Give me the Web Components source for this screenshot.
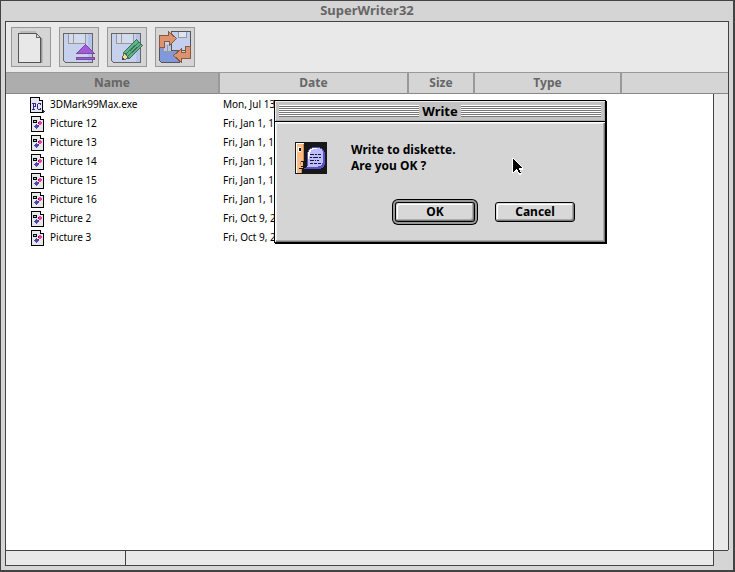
<!DOCTYPE html>
<html lang="en">
<head>
<meta charset="utf-8">
<title>SuperWriter32</title>
<style>
html, body { height: 100%; margin: 0; }
body { font-family: "Noto Sans", "Open Sans", sans-serif; color: #000; overflow: hidden; }
</style>
</head>
<body>
<app-window heading="SuperWriter32">
  <tool-bar slot="tools">
    <tool-button icon="page" label="New"></tool-button>
    <tool-button icon="eject" label="Eject"></tool-button>
    <tool-button icon="write" label="Write"></tool-button>
    <tool-button icon="copy" label="Copy disk"></tool-button>
  </tool-bar>
  <file-list></file-list>
  <status-bar slot="status"></status-bar>
</app-window>
<alert-dialog heading="Write">Write to diskette.<br>Are you OK ?</alert-dialog>
<mouse-pointer></mouse-pointer>

<script>
const define = (name, render) => customElements.define(name, class extends HTMLElement {
  connectedCallback() {
    if (this.shadowRoot) return;
    const t = document.createElement('template');
    t.innerHTML = render(this);
    this.attachShadow({ mode: 'open' }).append(t.content.cloneNode(true));
  }
});

const floppy = `
  <path fill="#b5c3ea" stroke="#666" d="M4.500 6.500h29v29h-27l-2-2z"/>
  <path fill="#c6d1ee" d="M5 7h24v28H7l-2-2z"/>
  <path fill="#d3dbee" stroke="#999" d="M9.500 6.500v10h17v-10M14.500 7v9"/>
  <path stroke="#666" d="M4 6.500h30"/>`;

const toolIcons = {
  page: `
    <path fill="#bbb" d="M9 4h16v2H9z"/>
    <path fill="#999" d="M30 11h1v25h-1z"/><path fill="#bbb" d="M31 11h1v25h-1z"/>
    <path fill="#e8e8e8" stroke="#555" d="M7.500 6.500h18l4 5v24h-22z"/>
    <path fill="#cfe3ee" stroke="#666" d="M25.500 6.500v4h4z"/>`,
  eject: floppy + `
    <path fill="#a35bdc" stroke="#7a4a9c" d="M26.500 17.500l9 9h-18zM17.500 30.500h18v2h-18z"/>`,
  write: floppy + `
    <path fill="#f2df8c" stroke="#666" d="M16.500 25.500l-1 7 7-1z"/>
    <path fill="#5db58a" stroke="#3d6b58" d="M16.500 25.500l13-13 6 6-13 13-2-1-1-3z"/>
    <path stroke="#3d6b58" fill="none" d="M19 27l13-12M21 29l13-12"/>
    <path fill="#444" d="M15 31h2v2h-2z"/>`,
  copy: `
    <path fill="#8199dc" stroke="#555" d="M4.500 17.500h20v18h-18l-2-2z"/>
    <path fill="#b9c6e8" stroke="#999" d="M8.500 17v7h10v-7M12 18v6"/>
    <path fill="#c3cfee" stroke="#555" d="M16.500 4.500h19v19h-19z"/>
    <path fill="#dde4f2" stroke="#999" d="M23.500 5v5h8v-5"/>
    <path fill="#dc9470" stroke="#8a5740" d="M4.500 20.500v-12h9v-4l8 7-7 7v-4h-5v6zM35.500 19.500v12h-9v4l-8-7 8-7v4h4v-6z"/>`
};

const fileIcons = {
  pc: `
    <path fill="#e6e6f0" stroke="#000" d="M.5.500h9l3 3v12H.5z"/>
    <path fill="#fff" stroke="#000" d="M9.500.500v3h3"/>
    <path fill="#332b8c" d="M2 6h4v1H2zM3 7h1v5H3zM2 12h3v1H2zM5 7h1v2H5zM4 9h2v1H4zM8 6h3v1H8zM7 7h1v5H7zM10 7h1v1h-1zM8 12h3v1H8zM10 11h1v1h-1z"/>
    <path fill="#333" d="M13 13h1v1h1v1h-1v1h-1z"/>`,
  picture: `
    <path fill="#e8e8e8" stroke="#000" d="M1.500.500h9l3 3v12h-12z"/>
    <path fill="#fff" stroke="#000" d="M10.500.500v3h3"/>
    <path fill="#000" d="M3 4h4v3H3z"/>
    <path fill="#7fe0e0" d="M4 5h2v1H4z"/>
    <path fill="#732050" d="M9 5h2v1h1v2h-1v1H9V8H8V6h1zM8 9h1v1H8z"/>
    <path fill="#f43aa5" d="M9 6h3v2H9zM9 5h2v4H9z"/>
    <path fill="#4b48b5" d="M6 8h1v1h1v1h1v1H8v1H7v1H6v-1H5v-1H4v-1h1V9h1z"/>`
};

const svg = (w, h, body) =>
  `<svg width="${w}" height="${h}" viewBox="0 0 ${w} ${h}" fill="none" shape-rendering="crispEdges" aria-hidden="true">${body}</svg>`;

define('app-window', el => `
  <style>
    :host { display: flex; flex-direction: column; box-sizing: border-box; height: 100vh;
      padding: 0 4px 4px; background: #d5d5d5;
      border: 1px solid #434343; border-right-width: 2px; border-bottom-width: 2px; }
    h1 { margin: 0; height: 20px; font-size: 13px; line-height: 18px; text-align: center; color: #666; }
    main { flex: 1; display: flex; flex-direction: column; min-height: 0;
      border: 1px solid #434343; border-bottom: 0; }
    ::slotted(file-list) { flex: 1; }
    footer { padding-right: 15px; }
  </style>
  <h1>${el.getAttribute('heading')}</h1>
  <main><slot name="tools"></slot><slot></slot></main>
  <footer><slot name="status"></slot></footer>`);

define('tool-bar', () => `
  <style>
    :host { display: flex; gap: 8px; padding: 5px; background: #e9e9e9; border-bottom: 1px solid #999; }
  </style><slot></slot>`);

define('tool-button', el => `
  <style>
    :host { display: block; }
    button { display: block; width: 40px; height: 40px; padding: 0; border: 1px solid #999; background: #d5d5d5; }
    svg { display: block; margin: -1px; }
  </style>
  <button type="button" aria-label="${el.getAttribute('label')}">${svg(40, 40, toolIcons[el.getAttribute('icon')])}</button>`);

const files = [
  ['pc', '3DMark99Max.exe', 'Mon, Jul 13'],
  ...[12, 13, 14, 15, 16].map(n => ['picture', 'Picture ' + n, 'Fri, Jan 1, 1']),
  ...[2, 3].map(n => ['picture', 'Picture ' + n, 'Fri, Oct 9, 2'])
];

define('file-list', () => `
  <style>
    :host { display: grid; grid-template: minmax(0, 1fr) / minmax(0, 1fr); background: #fff; }
    table { grid-area: 1 / 1; align-self: start; width: 100%; table-layout: fixed;
      border-collapse: separate; border-spacing: 0; }
    .name { width: 214px; } .date { width: 189px; } .size { width: 66px; } .type { width: 147px; }
    th { box-sizing: border-box; height: 21px; padding: 0; font-size: 12px; line-height: 20px; color: #666;
      background: #d5d5d5; border-right: 2px solid #999; border-bottom: 1px solid #888; }
    th.name { background: #adadad; }
    th:last-child { border-right: 0; }
    td { height: 19px; padding: 0 0 0 3px; font: 10px/19px "Noto Sans", sans-serif; white-space: nowrap; }
    td:first-child { padding-left: 24px; }
    span { display: flex; align-items: center; gap: 5px; }
    tbody::before { content: ""; display: table-row; height: 1px; }
    .track { grid-area: 1 / 1; justify-self: end; margin-top: 21px; width: 14px;
      border-left: 1px solid #434343; background: #e9e9e9; }
  </style>
  <table>
    <thead><tr><th class="name">Name</th><th class="date">Date</th><th class="size">Size</th><th class="type">Type</th><th></th></tr></thead>
    <tbody>${files.map(([k, n, d]) => `<tr><td><span>${svg(15, 16, fileIcons[k])}${n}</span></td><td>${d}</td><td></td><td></td><td></td></tr>`).join('')}</tbody>
  </table>
  <div class="track"></div>`);

define('status-bar', () => `
  <style>
    :host { position: relative; display: flex; height: 14px; background: #e9e9e9; border: 1px solid #434343; }
    :host::after { content: ""; position: absolute; left: 100%; top: -1px; width: 15px; height: 1px; background: #434343; }
    .count { width: 119px; border-right: 1px solid #434343; }
  </style>
  <div class="count"></div>`);

define('push-button', () => `
  <style>
    :host { display: block; }
    button { display: block; box-sizing: border-box; width: 80px; height: 20px; padding: 0;
      font: bold 12px/16px "Noto Sans", sans-serif; color: #000; background: #d8d8d8;
      border: 1px solid #000; border-radius: 3px;
      box-shadow: inset -1px -1px #777, inset 1px 1px #ddd, inset -2px -2px #aaa, inset 2px 2px #fff; }
    :host([default]) button { outline: 2px solid #999; outline-offset: 0;
      box-shadow: inset -1px -1px #777, inset 1px 1px #ddd, inset -2px -2px #aaa, inset 2px 2px #fff, 0 0 0 3px #000; }
  </style>
  <button type="button"><slot></slot></button>`);

define('alert-dialog', el => `
  <style>
    :host { position: absolute; left: 274px; top: 100px; width: 330px; background: #d5d5d5;
      border: 1px solid #000; box-shadow: 1px 1px #000; }
    header { display: flex; align-items: center; gap: 3px; height: 20px; padding: 0 4px;
      background: #c3c3c3; border-bottom: 1px solid #000; box-shadow: inset 1px 1px #eee, inset -1px -1px #aaa; }
    header::before, header::after { content: ""; flex: 1; height: 12px;
      background: repeating-linear-gradient(#fff 0 1px, #777 1px 2px); }
    h2 { margin: 0; font-size: 13px; line-height: 18px; }
    .body { padding: 20px 30px 20px 20px; box-shadow: inset 1px 1px #fff, inset -1px -1px #777, inset -2px -2px #aaa, inset 2px 2px #eee; }
    .message { display: flex; gap: 24px; }
    p { margin: 0; font: bold 12px/16px "Noto Sans", sans-serif; }
    .actions { display: flex; justify-content: flex-end; gap: 20px; margin-top: 28px; }
  </style>
  <header><h2>${el.getAttribute('heading')}</h2></header>
  <div class="body">
    <div class="message">${svg(32, 32, `
      <path fill="#181818" d="M0 0h32v32H0z"/>
      <path fill="#fbbd84" d="M1 1h8v18H8v5H6v1h2v2H6v4H1z"/>
      <path fill="#fff" d="M1 1h8v1H2v29H1z"/>
      <path fill="#d58b4d" d="M8 2h1v17H8zM5 20h1v3H5zM6 27h1v4H6z"/>
      <path fill="#fff" d="M3 5h3v5H3z"/>
      <path fill="#181818" d="M4 6h2v3H4zM6 19h3v1H6zM4 26h4v1H4z"/>
      <path fill="#5650c8" d="M17 5h8v1h2v1h1v1h1v2h1v13h-1v2h-1v1h-2v1H9v-1h2v-1h1V10h1V8h1V7h1V6h2z"/>
      <path fill="#bebeff" d="M17 6h8v1h2v2h1v12h-1v2h-1v1h-3v1H12v-1h1V10h1V8h1V7h2z"/>
      <path fill="#fff" d="M17 6h5v1h-4v1h-2v2h-1v4h-1v3h-1v-7h1V8h1V7h2z"/>
      <path fill="#181830" d="M15 12h4v1h-4zM20 12h2v1h-2zM23 12h3v1h-3zM15 15h2v1h-2zM18 15h5v1h-5zM24 15h2v1h-2zM15 18h4v1h-4zM20 18h1v1h-1zM22 18h2v1h-2zM15 21h3v1h-3zM19 21h3v1h-3zM23 21h3v1h-3z"/>`)}
      <p><slot></slot></p></div>
    <div class="actions"><push-button default>OK</push-button><push-button>Cancel</push-button></div>
  </div>`);

define('mouse-pointer', () => `
  <style>:host { position: absolute; left: 512px; top: 158px; } svg { display: block; }</style>
  ${svg(11, 17, `<path fill="#fff" d="M0 0h1l10 10v2H8l2 4-3 1-2-4-4 2H0z"/><path fill="#000" d="M1 1h1v1h1v1h1v1h1v1h1v1h1v1h1v1h1v1h1v1H7v2h1v2h1v1H7v-1H6v-2H5v-1H4v1H3v1H2v1H1z"/>`)}`);
</script>
</body>
</html>
